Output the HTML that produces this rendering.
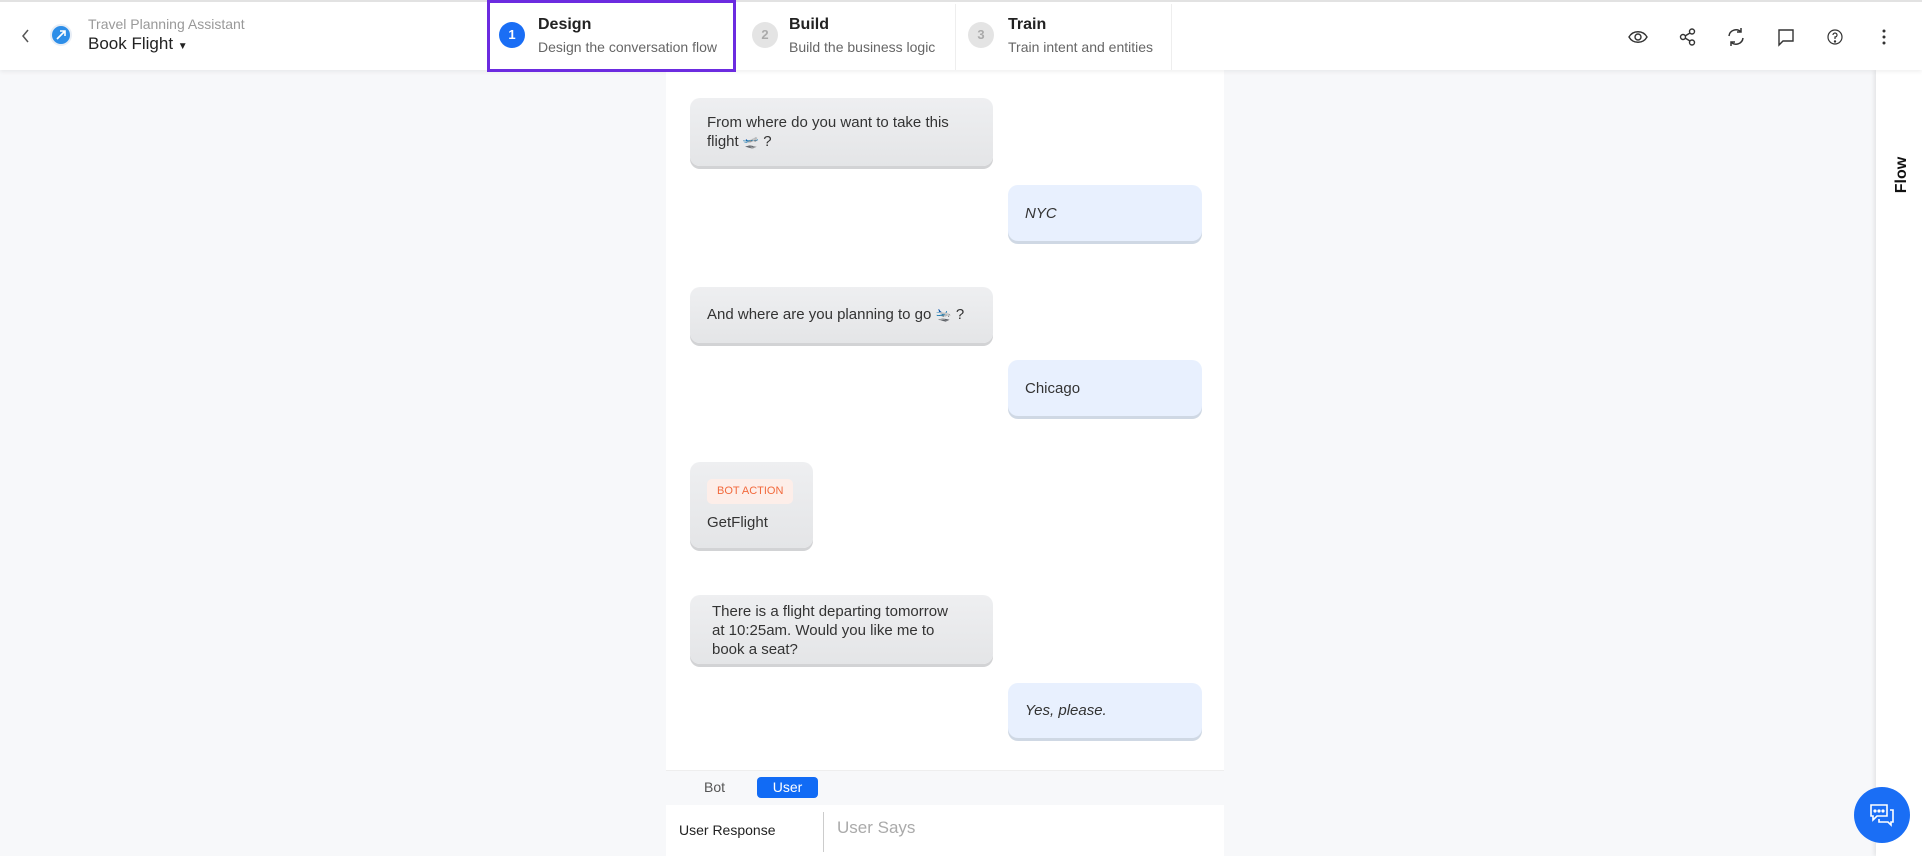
<!DOCTYPE html>
<html><head><meta charset="utf-8"><style>
*{box-sizing:border-box;margin:0;padding:0}
body{width:1922px;height:856px;overflow:hidden;background:#f7f8fa;font-family:"Liberation Sans",sans-serif;position:relative;color:#333}
.hdr{position:absolute;left:0;top:0;width:1922px;height:70px;background:#fff;border-top:2px solid #e2e2e2;box-shadow:0 2px 4px rgba(0,0,0,.06);z-index:2}
.abs{position:absolute}
.step .c{position:absolute;width:26px;height:26px;border-radius:50%;background:#e4e4e4;color:#aaa;font-size:13px;font-weight:bold;text-align:center;line-height:26px}
.step .t{position:absolute;font-size:16px;font-weight:bold;color:#222}
.step .s{position:absolute;font-size:14px;color:#666;white-space:nowrap}
.panel{position:absolute;left:666px;top:70px;width:558px;height:786px;background:#fff}
.b{position:absolute;left:24px;width:303px;border-radius:10px;background:linear-gradient(#eeeff1,#e4e5e7);box-shadow:0 3px 0 #d2d3d5;font-size:15px;line-height:19px;color:#333;padding:0 17px}
.u{position:absolute;left:342px;width:194px;border-radius:10px;background:#e8f0fe;box-shadow:0 3px 0 #cfd8e4;font-size:15px;color:#333;padding:0 17px;display:flex;align-items:center}
.side{position:absolute;left:1876px;top:70px;width:46px;height:786px;background:#fff;box-shadow:-2px 0 4px rgba(0,0,0,.08)}
</style></head><body>
<div class="hdr">
 <svg class="abs" style="left:20px;top:26px" width="12" height="16" viewBox="0 0 12 16"><path d="M8 2 L3 8 L8 14" fill="none" stroke="#555" stroke-width="1.5"/></svg>
 <div class="abs" style="left:50px;top:22px;width:22px;height:22px;border-radius:50%;background:#2d8ee8;border:2px solid #e8eef6"></div>
 <svg class="abs" style="left:55px;top:27px" width="12" height="12" viewBox="0 0 12 12"><path d="M2 10 L10 2 M5 2 H10 V7" stroke="#fff" stroke-width="1.6" fill="none"/></svg>
 <div class="abs" style="left:88px;top:14px;font-size:14px;color:#999">Travel Planning Assistant</div>
 <div class="abs" style="left:88px;top:32px;font-size:17px;color:#222">Book Flight <span style="font-size:10px">&#9660;</span></div>
 <div class="step"><div class="abs" style="left:487px;top:-2px;width:249px;height:72px;border:3px solid #6c2be0"></div>
  <div class="c" style="left:499px;top:20px;background:#1a6ef5;color:#fff">1</div><div class="t" style="left:538px;top:14px">Design</div><div class="s" style="left:538px;top:37px">Design the conversation flow</div></div>
 <div class="step"><div class="c" style="left:752px;top:20px">2</div><div class="t" style="left:789px;top:14px">Build</div><div class="s" style="left:789px;top:37px">Build the business logic</div></div>
 <div class="abs" style="left:955px;top:2px;width:1px;height:66px;background:#eee"></div>
 <div class="step"><div class="c" style="left:968px;top:20px">3</div><div class="t" style="left:1008px;top:14px">Train</div><div class="s" style="left:1008px;top:37px">Train intent and entities</div></div>
 <div class="abs" style="left:1171px;top:2px;width:1px;height:66px;background:#eee"></div>
 <svg class="abs" style="left:1628px;top:25px" width="20" height="20" viewBox="0 0 20 20" fill="none" stroke="#333" stroke-width="1.4"><path d="M1 10 C5 3 15 3 19 10 C15 17 5 17 1 10Z"/><circle cx="10" cy="10" r="3"/></svg>
 <svg class="abs" style="left:1678px;top:25px" width="20" height="20" viewBox="0 0 20 20" fill="none" stroke="#333" stroke-width="1.4"><circle cx="5" cy="10" r="2.5"/><circle cx="14" cy="4.5" r="2.5"/><circle cx="14" cy="15.5" r="2.5"/><path d="M7 9 L12 6 M7 11 L12 14"/></svg>
 <svg class="abs" style="left:1726px;top:25px" width="20" height="20" viewBox="0 0 20 20" fill="none" stroke="#333" stroke-width="1.5"><path d="M3 9 A7 7 0 0 1 15 5 M17 11 A7 7 0 0 1 5 15"/><path d="M15 1 V5 H11 M5 19 V15 H9"/></svg>
 <svg class="abs" style="left:1776px;top:25px" width="20" height="20" viewBox="0 0 20 20" fill="none" stroke="#333" stroke-width="1.4"><path d="M3 3 H17 V14 H7 L3 18 Z"/></svg>
 <svg class="abs" style="left:1825px;top:25px" width="20" height="20" viewBox="0 0 20 20" fill="none" stroke="#333" stroke-width="1.2"><circle cx="10" cy="10" r="7"/><path d="M8 8 A2 2 0 1 1 10 10 V12"/><circle cx="10" cy="14.5" r=".6" fill="#333"/></svg>
 <svg class="abs" style="left:1880px;top:25px" width="8" height="20" viewBox="0 0 8 20" fill="#333"><circle cx="4" cy="4" r="1.5"/><circle cx="4" cy="10" r="1.5"/><circle cx="4" cy="16" r="1.5"/></svg>
</div>
<div class="panel">
 <div class="b" style="top:28px;height:68px;padding-top:15px">From where do you want to take this flight <span style="font-size:13px">🛫</span> ?</div>
 <div class="u" style="top:115px;height:56px;font-style:italic">NYC</div>
 <div class="b" style="top:217px;height:56px;padding-top:18px;white-space:nowrap">And where are you planning to go <span style="font-size:13px">🛬</span> ?</div>
 <div class="u" style="top:290px;height:56px">Chicago</div>
 <div class="b" style="top:392px;height:86px;width:123px">
  <div style="margin-top:17px;display:inline-block;background:#fdeee9;color:#f26a3d;font-size:11px;padding:5px 10px;border-radius:5px;line-height:15px">BOT ACTION</div>
  <div style="margin-top:9px">GetFlight</div></div>
 <div class="b" style="top:525px;height:69px;padding:7px 40px 7px 22px;line-height:19px">There is a flight departing tomorrow at 10:25am. Would you like me to book a seat?</div>
 <div class="u" style="top:613px;height:55px;font-style:italic">Yes, please.</div>
 <div class="abs" style="left:0;top:700px;width:558px;height:35px;background:#f7f8fa;border-top:1px solid #eee"></div>
 <div class="abs" style="left:38px;top:709px;font-size:14px;color:#555">Bot</div>
 <div class="abs" style="left:91px;top:707px;width:61px;height:21px;border-radius:4px;background:#116bf5;color:#fff;font-size:14px;text-align:center;line-height:21px">User</div>
 <div class="abs" style="left:13px;top:752px;font-size:14px;color:#222">User Response</div>
 <div class="abs" style="left:157px;top:742px;width:1px;height:40px;background:#ccc"></div>
 <div class="abs" style="left:171px;top:748px;font-size:17px;color:#aaa">User Says</div>
</div>
<div class="side"><div class="abs" style="left:6px;top:96px;transform:rotate(-90deg);transform-origin:center;font-weight:bold;font-size:16px;color:#111;width:40px;text-align:center">Flow</div></div>
<div class="abs" style="left:1854px;top:787px;width:56px;height:56px;border-radius:50%;background:#1a6ef5"></div>
<svg class="abs" style="left:1868px;top:801px" width="28" height="28" viewBox="0 0 28 28" fill="none" stroke="#fff" stroke-width="1.6"><path d="M3 4 H19 V15 H9 L5 19 V15 H3 Z"/><path d="M22 9 H25 V21 H23 V24 L20 21 H11 V18"/><circle cx="7" cy="10" r=".8" fill="#fff"/><circle cx="11" cy="10" r=".8" fill="#fff"/><circle cx="15" cy="10" r=".8" fill="#fff"/></svg>
</body></html>
